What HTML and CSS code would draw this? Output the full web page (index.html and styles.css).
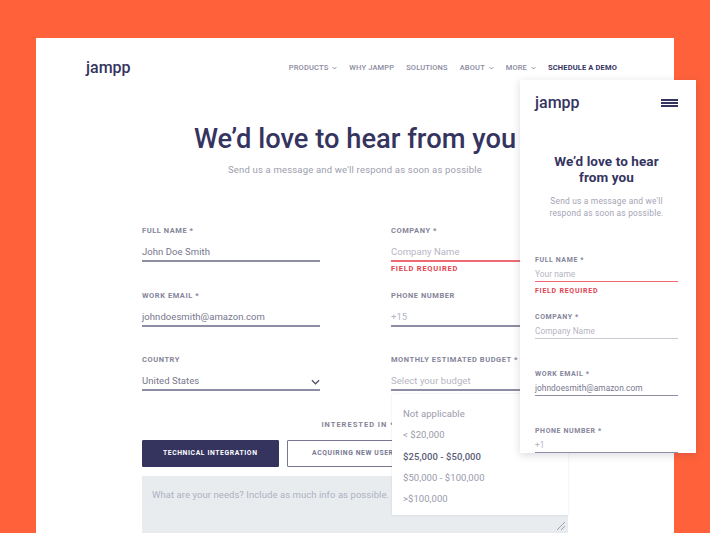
FILE: index.html
```html
<!DOCTYPE html>
<html lang="en">
<head>
<meta charset="UTF-8" />
<meta name="viewport" content="width=device-width, initial-scale=1" />
<title>Jampp - Contact</title>
<link rel="stylesheet" href="styles.css">
</head>
<body>
  <main class="desktop">
    <header class="topbar">
      <div class="logo">jampp</div>
      <nav class="nav">
        <a>PRODUCTS <svg class="caret" viewBox="0 0 8 5"><path d="M1 1l3 3 3-3" /></svg></a>
        <a>WHY JAMPP</a>
        <a>SOLUTIONS</a>
        <a>ABOUT <svg class="caret" viewBox="0 0 8 5"><path d="M1 1l3 3 3-3" /></svg></a>
        <a>MORE <svg class="caret" viewBox="0 0 8 5"><path d="M1 1l3 3 3-3" /></svg></a>
        <a class="nav-demo">SCHEDULE A DEMO</a>
      </nav>
    </header>

    <h1>We’d love to hear from you</h1>
    <p class="lead">Send us a message and we'll respond as soon as possible</p>

    <form class="form">
      <div class="field">
        <label>FULL NAME *</label>
        <div class="input filled">John Doe Smith</div>
      </div>
      <div class="field">
        <label>COMPANY *</label>
        <div class="input error">Company Name</div>
        <div class="error-text">FIELD REQUIRED</div>
      </div>
      <div class="field">
        <label>WORK EMAIL *</label>
        <div class="input filled">johndoesmith@amazon.com</div>
      </div>
      <div class="field">
        <label>PHONE NUMBER</label>
        <div class="input">+15</div>
      </div>
      <div class="field">
        <label>COUNTRY</label>
        <div class="input filled select">United States
          <svg class="select-caret" viewBox="0 0 10 6"><path d="M1 1l4 4 4-4" /></svg>
        </div>
      </div>
      <div class="field">
        <label>MONTHLY ESTIMATED BUDGET *</label>
        <div class="input">Select your budget</div>
        <ul class="dropdown">
          <li>Not applicable</li>
          <li>&lt; $20,000</li>
          <li class="active">$25,000 - $50,000</li>
          <li>$50,000 - $100,000</li>
          <li>&gt;$100,000</li>
        </ul>
      </div>

      <div class="interest">INTERESTED IN *</div>
      <div class="choices">
        <button type="button" class="choice selected">TECHNICAL INTEGRATION</button>
        <button type="button" class="choice">ACQUIRING NEW USERS</button>
      </div>
      <div class="needs">What are your needs? Include as much info as possible.
        <svg class="grip" viewBox="0 0 10 10"><path d="M1 9l8-8M5 9l4-4" /></svg>
      </div>
    </form>
  </main>

  <aside class="mobile">
    <div class="mobile-top">
      <div class="logo">jampp</div>
      <div class="burger"><span></span><span></span><span></span></div>
    </div>
    <h2>We’d love to hear<br>from you</h2>
    <p class="mobile-lead">Send us a message and we'll<br>respond as soon as possible.</p>
    <div class="mobile-fields">
      <div class="mobile-field">
        <label>FULL NAME *</label>
        <div class="input error">Your name</div>
        <div class="error-text">FIELD REQUIRED</div>
      </div>
      <div class="mobile-field">
        <label>COMPANY *</label>
        <div class="input pale">Company Name</div>
      </div>
      <div class="mobile-field">
        <label>WORK EMAIL *</label>
        <div class="input filled">johndoesmith@amazon.com</div>
      </div>
      <div class="mobile-field">
        <label>PHONE NUMBER *</label>
        <div class="input">+1</div>
      </div>
    </div>
  </aside>
</body>
</html>
```

FILE: styles.css
```css
:root {
  --orange: #ff623a;
  --navy: #35345f;
  --grey: #8f8fa3;
  --label: #85859a;
  --line: #8d8da3;
  --red: #e0434f;
}
html, body {
  height: 100%;
}
body {
  margin: 0;
  height: 533px;
  overflow: hidden;
  position: relative;
  background-color: var(--orange);
  font-family: Roboto, "Liberation Sans", sans-serif;
  color: var(--grey);
}
.desktop {
  margin: 38px 36px 0;
  height: 495px;
  background: white;
  overflow: hidden;
}
.topbar {
  display: flex;
  justify-content: space-between;
  align-items: center;
  padding: 19.5px 57px 0 50px;
  height: 20px;
}
.logo {
  font-size: 16px;
  font-weight: 500;
  line-height: 20px;
  color: var(--navy);
}
.nav {
  display: flex;
  gap: 12px;
  font-size: 7.5px;
  font-weight: 500;
  letter-spacing: 0.15px;
  color: #8a8a9e;
}
.nav-demo {
  color: var(--navy);
  font-weight: 700;
}
.caret {
  width: 5px;
  height: 4px;
  margin-left: 2px;
  fill: none;
  stroke: #77778f;
  stroke-width: 1.3;
}
h1 {
  margin: 43.5px 0 0;
  text-align: center;
  font-size: 27.3px;
  line-height: 36px;
  font-weight: 500;
  color: var(--navy);
}
.lead {
  margin: 6px 0 0;
  text-align: center;
  font-size: 9.5px;
  line-height: 14px;
  letter-spacing: 0.18px;
  color: #9d9dae;
}
.form {
  position: relative;
  display: grid;
  grid-template-columns: 178px 177px;
  column-gap: 71px;
  margin: 49px 0 0 106px;
  width: 426px;
}
.field {
  position: relative;
  height: 64.5px;
}
label {
  display: block;
  font-size: 7.5px;
  line-height: 10px;
  font-weight: 700;
  letter-spacing: 0.55px;
  color: var(--label);
}
.input {
  margin-top: 10px;
  height: 16px;
  line-height: 12px;
  padding-bottom: 1px;
  box-sizing: border-box;
  border-bottom: 2px solid var(--line);
  font-size: 9.5px;
  letter-spacing: 0.06px;
  color: #b5b5c2;
  position: relative;
}
.filled {
  color: #76768d;
}
.error {
  border-bottom-color: #ef6a72;
}
.pale {
  border-bottom-color: #c9c9d4;
}
.error-text {
  margin-top: 2px;
  font-size: 7.5px;
  line-height: 10px;
  font-weight: 700;
  letter-spacing: 0.75px;
  color: var(--red);
}
.select-caret {
  position: absolute;
  right: 0;
  top: 4px;
  width: 9px;
  height: 6px;
  fill: none;
  stroke: #55556f;
  stroke-width: 1.5;
}
.dropdown {
  position: absolute;
  z-index: 2;
  left: 1px;
  top: 39px;
  width: 176px;
  height: 121px;
  box-sizing: border-box;
  margin: 0;
  padding: 9px 0 0 11px;
  list-style: none;
  background: white;
  box-shadow: 0 0 2px rgba(50, 50, 90, 0.12);
  font-size: 9.5px;
  line-height: 21.3px;
  letter-spacing: 0.06px;
  color: #9a9aab;
}
.dropdown .active {
  color: #5c5c78;
  font-weight: 500;
}
.interest {
  grid-column: span 2;
  padding-left: 6px;
  text-align: center;
  font-size: 7.5px;
  line-height: 10px;
  font-weight: 700;
  letter-spacing: 1px;
  color: var(--label);
}
.choices {
  grid-column: span 2;
  display: flex;
  gap: 8.5px;
  margin-top: 10px;
}
.choice {
  width: 136.5px;
  height: 27px;
  padding: 0;
  border: 1px solid #77778f;
  border-radius: 1px;
  background: white;
  font-family: inherit;
  font-size: 6.8px;
  font-weight: 700;
  letter-spacing: 0.6px;
  color: #77778f;
}
.selected {
  background: var(--navy);
  border-color: var(--navy);
  color: white;
}
.needs {
  grid-column: span 2;
  position: relative;
  margin-top: 9px;
  height: 90px;
  box-sizing: border-box;
  padding: 12px 10px;
  background: #e8ecef;
  font-size: 9.5px;
  line-height: 14px;
  letter-spacing: 0.06px;
  color: #aeb1bf;
}
.grip {
  position: absolute;
  right: 2px;
  top: 45px;
  width: 10px;
  height: 10px;
  fill: none;
  stroke: #8d8d9f;
  stroke-width: 0.8;
}
.mobile {
  position: absolute;
  z-index: 3;
  left: 520px;
  top: 80px;
  width: 176px;
  height: 373px;
  box-sizing: border-box;
  padding: 0 18px 0 15px;
  background: white;
  box-shadow: 0 2px 8px rgba(50, 50, 90, 0.18);
  overflow: hidden;
}
.mobile-top {
  display: flex;
  justify-content: space-between;
  align-items: center;
  height: 20px;
  margin-top: 13px;
}
.burger {
  display: flex;
  flex-direction: column;
  gap: 1.5px;
  width: 17px;
}
.burger span {
  height: 1.5px;
  background: var(--navy);
}
h2 {
  margin: 40px 0 0;
  text-align: center;
  font-size: 13.5px;
  line-height: 16px;
  font-weight: 700;
  letter-spacing: 0.1px;
  color: var(--navy);
}
.mobile-lead {
  margin: 9.5px 0 0;
  text-align: center;
  font-size: 8.4px;
  line-height: 12.2px;
  letter-spacing: 0.2px;
  color: #a4a4b4;
}
.mobile-fields {
  margin-top: 36px;
}
.mobile-field {
  height: 57px;
}
.mobile-field label {
  letter-spacing: 0.6px;
  font-size: 7px;
}
.mobile-field .input {
  margin-top: 3px;
  font-size: 8.3px;
  height: 14px;
  line-height: 12px;
  border-bottom-width: 1.5px;
}
.mobile-field .error-text {
  margin-top: 4px;
  font-size: 7px;
}
```
